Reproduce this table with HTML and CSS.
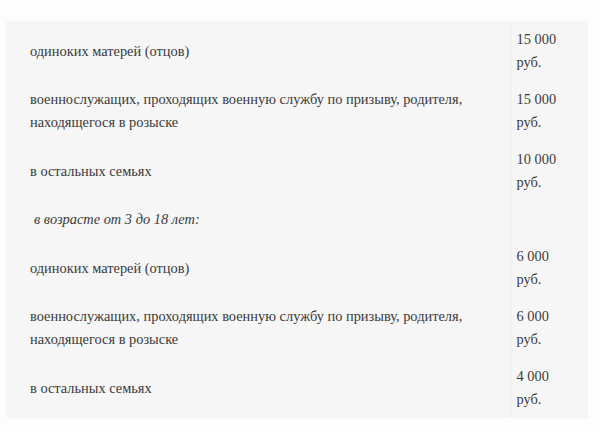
FILE: index.html
```html
<!DOCTYPE html>
<html lang="ru">
<head>
<meta charset="utf-8">
<link rel="stylesheet" href="styles.css">
</head>
<body>
<table class="benefits">
  <colgroup>
    <col class="col-label">
    <col class="col-amount">
  </colgroup>
  <tr>
    <td class="label">одиноких матерей (отцов)</td>
    <td class="amount">15 000 руб.</td>
  </tr>
  <tr>
    <td class="label">военнослужащих, проходящих военную службу по призыву, родителя, находящегося в розыске</td>
    <td class="amount">15 000 руб.</td>
  </tr>
  <tr>
    <td class="label">в остальных семьях</td>
    <td class="amount">10 000 руб.</td>
  </tr>
  <tr>
    <td class="label heading">в возрасте от 3 до 18 лет:</td>
    <td class="amount"></td>
  </tr>
  <tr>
    <td class="label">одиноких матерей (отцов)</td>
    <td class="amount">6 000 руб.</td>
  </tr>
  <tr>
    <td class="label">военнослужащих, проходящих военную службу по призыву, родителя, находящегося в розыске</td>
    <td class="amount">6 000 руб.</td>
  </tr>
  <tr>
    <td class="label">в остальных семьях</td>
    <td class="amount">4 000 руб.</td>
  </tr>
</table>
</body>
</html>
```
FILE: styles.css
```css
html, body {
  margin: 0;
  padding: 0;
  background: #fdfdfd;
}
body {
  font-family: "Liberation Serif", serif;
  font-size: 14.4px;
  line-height: 23px;
  color: #3a3a3a;
}
.benefits {
  margin: 21px 0 0 6px;
  width: 582px;
  table-layout: fixed;
  border-collapse: collapse;
  background: #f6f6f6;
}
.col-label {
  width: 504px;
}
.col-amount {
  width: 78px;
}
.benefits td {
  padding: 7px 0;
  vertical-align: middle;
}
.label {
  padding-left: 24px !important;
  padding-right: 8px !important;
}
.heading {
  font-style: italic;
  padding-left: 28px !important;
}
.amount {
  padding-left: 6px !important;
  padding-right: 15px !important;
  border-left: 1px solid #ececec;
}
```
